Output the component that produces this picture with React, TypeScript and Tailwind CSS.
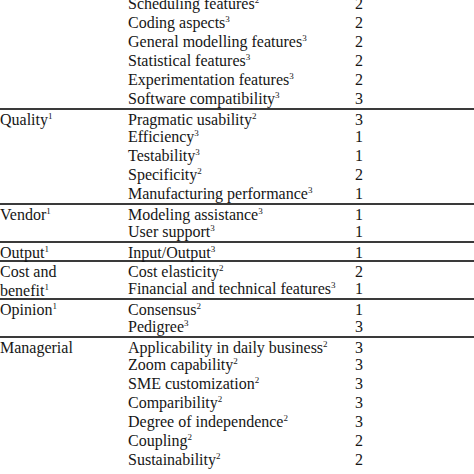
const groups: { label: React.ReactNode; rows: [string, number, number][] }[] = [
  {
    label: null,
    rows: [
      ["Scheduling features", 2, 2],
      ["Coding aspects", 3, 2],
      ["General modelling features", 3, 2],
      ["Statistical features", 3, 2],
      ["Experimentation features", 3, 2],
      ["Software compatibility", 3, 3],
    ],
  },
  {
    label: <>Quality<Sup n={1} /></>,
    rows: [
      ["Pragmatic usability", 2, 3],
      ["Efficiency", 3, 1],
      ["Testability", 3, 1],
      ["Specificity", 2, 2],
      ["Manufacturing performance", 3, 1],
    ],
  },
  {
    label: <>Vendor<Sup n={1} /></>,
    rows: [
      ["Modeling assistance", 3, 1],
      ["User support", 3, 1],
    ],
  },
  {
    label: <>Output<Sup n={1} /></>,
    rows: [["Input/Output", 3, 1]],
  },
  {
    label: <>Cost and<br />benefit<Sup n={1} /></>,
    rows: [
      ["Cost elasticity", 2, 2],
      ["Financial and technical features", 3, 1],
    ],
  },
  {
    label: <>Opinion<Sup n={1} /></>,
    rows: [
      ["Consensus", 2, 1],
      ["Pedigree", 3, 3],
    ],
  },
  {
    label: <>Managerial</>,
    rows: [
      ["Applicability in daily business", 2, 3],
      ["Zoom capability", 2, 3],
      ["SME customization", 2, 3],
      ["Comparibility", 2, 3],
      ["Degree of independence", 2, 3],
      ["Coupling", 2, 2],
      ["Sustainability", 2, 2],
    ],
  },
]

function Sup({ n }: { n: number }) {
  return <span className="relative -top-[6px] text-[9px] leading-none">{n}</span>
}

export default function App() {
  return (
    <div
      className="h-[474px] w-[474px] overflow-hidden bg-white text-[16px] leading-[19px] text-[#161616]"
      style={{ fontFamily: '"Liberation Serif", "Times New Roman", serif' }}
    >
      <div className="-mt-[6px]">
        {groups.map((g, gi) => (
          <div
            key={gi}
            className={gi === 0 ? "flex" : "flex border-t-2 border-[#3a3a3a]"}
          >
            <div className="-mb-[2px] w-[128px] shrink-0 whitespace-nowrap">{g.label}</div>
            <div className="flex-1">
              {g.rows.map(([name, sup, score], ri) => (
                <div key={ri} className={ri === 0 && gi > 0 ? "flex h-[17px]" : "flex h-[19px]"}>
                  <div className="w-[227px] shrink-0 whitespace-nowrap">
                    {name}
                    <Sup n={sup} />
                  </div>
                  <div>{score}</div>
                </div>
              ))}
            </div>
          </div>
        ))}
      </div>
    </div>
  )
}
